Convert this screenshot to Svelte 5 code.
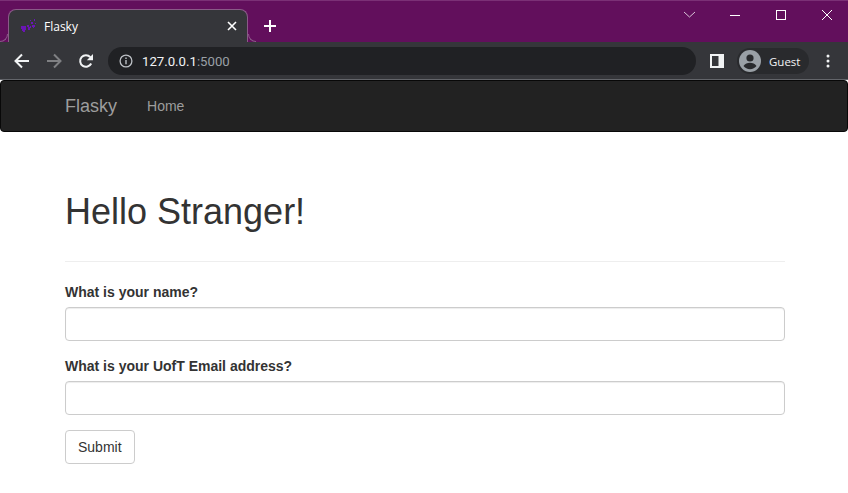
<script lang="ts">
  let name = $state('');
  let email = $state('');
</script>

<div class="browser">
  <div class="titlebar">
    <div class="tab">
      <svg class="favicon" width="16" height="16" viewBox="0 0 16 16">
        <g fill="#6a16b4">
          <rect x="0" y="8" width="2" height="3" />
          <rect x="1" y="10" width="3" height="3" />
          <rect x="2" y="13" width="2" height="1" />
          <rect x="2" y="8" width="3" height="2" />
          <rect x="4" y="10" width="1" height="2" />
          <rect x="6" y="7" width="2" height="2" />
          <rect x="7" y="9" width="2" height="3" />
          <rect x="9" y="8" width="1" height="2" />
          <rect x="10" y="4" width="2" height="2" />
          <rect x="11" y="7" width="3" height="2" />
          <rect x="12" y="9" width="1" height="1" />
          <rect x="9" y="2" width="1" height="1" />
          <rect x="13" y="1" width="1" height="2" />
          <rect x="14" y="5" width="1" height="1" />
        </g>
      </svg>
      <span class="tab-title">Flasky</span>
      <svg class="tab-close" width="10" height="10" viewBox="0 0 10 10">
        <path d="M1 1l8 8M9 1l-8 8" stroke="#fff" stroke-width="1.6" fill="none" />
      </svg>
    </div>
    <svg class="new-tab" width="12" height="12" viewBox="0 0 12 12">
      <path d="M6 0v12M0 6h12" stroke="#fff" stroke-width="2" fill="none" />
    </svg>
    <div class="window-controls">
      <svg width="46" height="30" viewBox="0 0 46 30">
        <path d="M18 12l5.500 5 5.500-5" stroke="#d9c5d8" fill="none" />
      </svg>
      <svg width="46" height="30" viewBox="0 0 46 30">
        <path d="M18 15.500h10" stroke="#fff" fill="none" />
      </svg>
      <svg width="46" height="30" viewBox="0 0 46 30">
        <rect x="18.500" y="10.500" width="9" height="9" stroke="#fff" fill="none" />
      </svg>
      <svg width="46" height="30" viewBox="0 0 46 30">
        <path d="M18 10l10 10M28 10l-10 10" stroke="#fff" fill="none" />
      </svg>
    </div>
  </div>

  <div class="toolbar">
    <svg class="tool" width="16" height="16" viewBox="0 0 16 16">
      <path d="M15 8H2M8 1.500L1.500 8 8 14.500" stroke="#f1f3f4" stroke-width="2" fill="none" />
    </svg>
    <svg class="tool" width="16" height="16" viewBox="0 0 16 16">
      <path d="M1 8h13M8 1.500L14.500 8 8 14.500" stroke="#7f8083" stroke-width="2" fill="none" />
    </svg>
    <svg class="tool" width="16" height="16" viewBox="0 0 16 16">
      <path d="M13.200 10.500A5.800 5.800 0 1 1 12.300 4.100" stroke="#f1f3f4" stroke-width="2" fill="none" />
      <path d="M15 1v6.200H8.800z" fill="#f1f3f4" />
    </svg>
    <div class="omnibox">
      <svg width="14" height="14" viewBox="0 0 14 14">
        <circle cx="7" cy="7" r="5.900" stroke="#bdc1c6" stroke-width="1.300" fill="none" />
        <path d="M7 6v4.300M7 3.500v1.400" stroke="#bdc1c6" stroke-width="1.400" fill="none" />
      </svg>
      <span class="url">127.0.0.1<span class="port">:5000</span></span>
    </div>
    <svg class="side-panel" width="14" height="14" viewBox="0 0 14 14">
      <path d="M0 0h14v14H0zM2 2v10h6.500V2z" fill="#f1f3f4" fill-rule="evenodd" />
    </svg>
    <div class="profile">
      <svg width="22" height="22" viewBox="0 0 22 22">
        <circle cx="11" cy="11" r="11" fill="#9aa0a6" />
        <circle cx="11" cy="8" r="3.600" fill="#292a2d" />
        <path d="M4.500 16c1.500-2.300 4-3.200 6.500-3.200s5 .9 6.500 3.200c-1.500 2-3.800 3.200-6.500 3.200s-5-1.200-6.500-3.200z" fill="#292a2d" />
      </svg>
      <span>Guest</span>
    </div>
    <svg class="menu" width="4" height="14" viewBox="0 0 4 14">
      <g fill="#f1f3f4">
        <circle cx="2" cy="2" r="1.500" />
        <circle cx="2" cy="7" r="1.500" />
        <circle cx="2" cy="12" r="1.500" />
      </g>
    </svg>
  </div>
</div>

<nav class="navbar">
  <a class="brand" href="/">Flasky</a>
  <a class="nav-link" href="/">Home</a>
</nav>

<main class="container">
  <div class="page-header">
    <h1>Hello Stranger!</h1>
  </div>
  <form on:submit|preventDefault>
    <div class="form-group">
      <label for="name">What is your name?</label>
      <input id="name" type="text" bind:value={name} />
    </div>
    <div class="form-group">
      <label for="email">What is your UofT Email address?</label>
      <input id="email" type="text" bind:value={email} />
    </div>
    <button type="submit">Submit</button>
  </form>
</main>

<style>
  :global(body) {
    background: #fff;
    font-family: "Liberation Sans", Arial, sans-serif;
    font-size: 14px;
    color: #333;
    overflow: hidden;
  }

  .titlebar {
    display: flex;
    align-items: flex-start;
    height: 42px;
    box-sizing: border-box;
    padding: 8px 0 0 8px;
    background: #620f5c;
    border-top: 1px solid #7b3076;
  }
  .tab {
    position: relative;
    display: flex;
    align-items: center;
    box-sizing: border-box;
    width: 240px;
    height: 33px;
    padding: 0 10px 0 12px;
    background: #35363a;
    border: 1px solid #8a5a88;
    border-bottom: none;
    border-radius: 8px 8px 0 0;
  }
  .tab::before,
  .tab::after {
    content: "";
    position: absolute;
    bottom: 0;
    width: 8px;
    height: 8px;
    background: #620f5c;
    border-bottom: 1px solid #8a5a88;
    box-sizing: border-box;
  }
  .tab::before {
    left: -9px;
    border-right: 1px solid #8a5a88;
    border-bottom-right-radius: 8px;
  }
  .tab::after {
    right: -9px;
    border-left: 1px solid #8a5a88;
    border-bottom-left-radius: 8px;
  }
  .favicon {
    flex: none;
  }
  .tab-title {
    margin-left: 7px;
    font: 12px "Open Sans", "Liberation Sans", sans-serif;
    color: #fff;
  }
  .tab-close {
    margin-left: auto;
  }
  .new-tab {
    margin: 11px 0 0 16px;
  }
  .window-controls {
    display: flex;
    margin: -9px -2px 0 auto;
  }

  .toolbar {
    display: flex;
    align-items: center;
    height: 38px;
    box-sizing: border-box;
    padding: 1px 16px 0 14px;
    background: #35363a;
    border-bottom: 1px solid #63656a;
  }
  .tool {
    flex: none;
    margin-right: 16px;
  }
  .omnibox {
    display: flex;
    align-items: center;
    flex: none;
    box-sizing: border-box;
    width: 588px;
    height: 28px;
    margin-left: -2px;
    padding-left: 11px;
    background: #202124;
    border-radius: 14px;
  }
  .url {
    margin-left: 9px;
    font: 13.200px Roboto, sans-serif;
    color: #f1f3f4;
  }
  .port {
    color: #9aa0a6;
  }
  .side-panel {
    flex: none;
    margin-left: 14px;
  }
  .profile {
    display: flex;
    align-items: center;
    box-sizing: border-box;
    width: 72px;
    height: 26px;
    margin-left: 13px;
    padding-left: 2px;
    background: #292a2d;
    border-radius: 13px;
    font: 11.500px "Open Sans", sans-serif;
    color: #f1f3f4;
  }
  .profile span {
    margin-left: 8px;
  }
  .menu {
    flex: none;
    margin-left: 17px;
  }

  .navbar {
    display: flex;
    align-items: center;
    box-sizing: border-box;
    height: 52px;
    padding-left: 64px;
    background: #222;
    border: 1px solid #080808;
    border-radius: 4px;
  }
  .brand {
    font-size: 18px;
    color: #9d9d9d;
    text-decoration: none;
  }
  .nav-link {
    margin-left: 30px;
    color: #9d9d9d;
    text-decoration: none;
  }

  .container {
    box-sizing: border-box;
    width: 720px;
    margin-left: 65px;
  }
  .page-header {
    margin: 60px 0 20px;
    padding-bottom: 19px;
    border-bottom: 1px solid #eee;
  }
  h1 {
    margin: 20px 0 10px;
    font-size: 36px;
    font-weight: 500;
    line-height: 1.1;
    color: #333;
  }
  .form-group {
    margin-bottom: 15px;
  }
  label {
    display: block;
    margin-bottom: 5px;
    font-weight: 700;
    line-height: 20px;
  }
  input {
    display: block;
    box-sizing: border-box;
    width: 100%;
    height: 34px;
    padding: 6px 12px;
    font: inherit;
    color: #555;
    background: #fff;
    border: 1px solid #ccc;
    border-radius: 4px;
    box-shadow: inset 0 1px 1px rgba(0, 0, 0, 0.075);
  }
  button {
    display: block;
    box-sizing: border-box;
    height: 34px;
    padding: 6px 12px;
    font: inherit;
    line-height: 20px;
    color: #333;
    background: #fff;
    border: 1px solid #ccc;
    border-radius: 4px;
  }
</style>
